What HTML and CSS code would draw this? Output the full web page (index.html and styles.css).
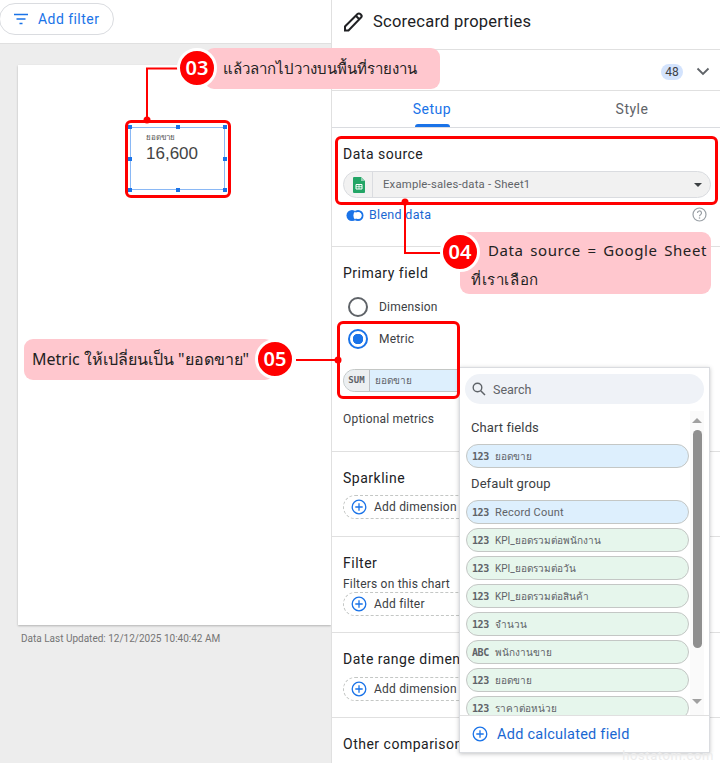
FILE: index.html
```html
<!DOCTYPE html>
<html lang="th">

<head>
    <meta charset="UTF-8">
    <meta name="viewport" content="width=device-width, initial-scale=1.0">
    <title>Scorecard properties</title>
    <link rel="stylesheet" href="styles.css">
</head>

<body>
    <div class="screen">
        <div class="report">
            <div class="report-bar">
                <button class="filter-button">
                    <svg width="16" height="12" viewBox="0 0 16 12"><path d="M1 1.500h14M3.500 6h9M6.500 10.500h3" fill="none" stroke="#1a73e8" stroke-width="1.600"/></svg>
                    Add filter
                </button>
            </div>
            <div class="canvas">
                <div class="sheet">
                    <div class="scorecard">
                        <div class="scorecard-label">ยอดขาย</div>
                        <div class="scorecard-value">16,600</div>
                        <i class="handle h-tl"></i><i class="handle h-tc"></i><i class="handle h-tr"></i>
                        <i class="handle h-ml"></i><i class="handle h-mr"></i>
                        <i class="handle h-bl"></i><i class="handle h-bc"></i><i class="handle h-br"></i>
                    </div>
                </div>
                <div class="updated">Data Last Updated: 12/12/2025 10:40:42 AM</div>
            </div>
        </div>

        <div class="panel">
            <div class="panel-title">
                <svg width="24" height="24" viewBox="0 0 24 24"><path d="M4 20.500v-4L16.500 4c.8-.8 2-.8 2.800 0l.7.7c.8.8.8 2 0 2.800L7.500 20.500H4zM14.800 5.700l3.500 3.500" fill="none" stroke="#202124" stroke-width="2"/></svg>
                <span>Scorecard properties</span>
            </div>
            <div class="panel-sub">
                <span class="count">48</span>
                <svg width="14" height="9" viewBox="0 0 14 9"><path d="M1.500 1.500L7 7l5.500-5.500" fill="none" stroke="#5f6368" stroke-width="1.800"/></svg>
            </div>
            <div class="tabs">
                <div class="tab tab-active">Setup</div>
                <div class="tab">Style</div>
            </div>

            <section class="section section-source">
                <h3 class="section-title">Data source</h3>
                <div class="source-select">
                    <span class="source-icon">
                        <svg width="12" height="16" viewBox="0 0 12 16"><path d="M1 0h7l4 4v11a1 1 0 0 1-1 1H1a1 1 0 0 1-1-1V1a1 1 0 0 1 1-1z" fill="#23a566"/><path d="M8 0l4 4H8z" fill="#8ed1b1"/><path d="M3 7.500h6v4.500H3z" fill="none" stroke="#fff" stroke-width="1"/><path d="M6 7.500v4.500M3 9.700h6" stroke="#fff" stroke-width=".8"/></svg>
                    </span>
                    <span class="source-name">Example-sales-data - Sheet1</span>
                    <span class="caret"></span>
                </div>
                <div class="blend-row">
                    <svg width="18" height="13" viewBox="0 0 18 13"><circle cx="6" cy="6.500" r="5.500" fill="#1a73e8"/><circle cx="12" cy="6.500" r="4.500" fill="#fff" stroke="#1a73e8" stroke-width="2"/><path d="M9 2.600a5.500 5.500 0 0 1 0 7.800a5.500 5.500 0 0 1 0-7.800z" fill="#fff"/><circle cx="12.500" cy="6.500" r="3" fill="#fff"/></svg>
                    <span class="blend-text">Blend data</span>
                    <svg class="help" width="15" height="15" viewBox="0 0 15 15"><circle cx="7.500" cy="7.500" r="6.500" fill="none" stroke="#9aa0a6" stroke-width="1.200"/><path d="M5.500 6a2 2 0 1 1 3 1.700c-.7.400-1 .8-1 1.500" fill="none" stroke="#9aa0a6" stroke-width="1.200"/><circle cx="7.500" cy="11" r=".8" fill="#9aa0a6"/></svg>
                </div>
            </section>

            <section class="section section-primary">
                <h3 class="section-title">Primary field</h3>
                <div class="radio-row"><span class="radio"></span>Dimension</div>
                <div class="radio-row"><span class="radio radio-on"></span>Metric</div>
                <div class="metric-chip"><span class="metric-sum">SUM</span><span class="metric-name">ยอดขาย</span></div>
                <div class="optional">Optional metrics</div>
            </section>

            <section class="section section-spark">
                <h3 class="section-title">Sparkline</h3>
                <div class="add-chip">
                    <svg class="plus" width="16" height="16" viewBox="0 0 16 16"><circle cx="8" cy="8" r="6.800" fill="none" stroke="#1a73e8" stroke-width="1.300"/><path d="M8 4.300v7.400M4.300 8h7.400" stroke="#1a73e8" stroke-width="1.300"/></svg>
                    Add dimension
                </div>
            </section>

            <section class="section section-filter">
                <h3 class="section-title">Filter</h3>
                <div class="section-note">Filters on this chart</div>
                <div class="add-chip">
                    <svg class="plus" width="16" height="16" viewBox="0 0 16 16"><circle cx="8" cy="8" r="6.800" fill="none" stroke="#1a73e8" stroke-width="1.300"/><path d="M8 4.300v7.400M4.300 8h7.400" stroke="#1a73e8" stroke-width="1.300"/></svg>
                    Add filter
                </div>
            </section>

            <section class="section section-date">
                <h3 class="section-title">Date range dimension</h3>
                <div class="add-chip">
                    <svg class="plus" width="16" height="16" viewBox="0 0 16 16"><circle cx="8" cy="8" r="6.800" fill="none" stroke="#1a73e8" stroke-width="1.300"/><path d="M8 4.300v7.400M4.300 8h7.400" stroke="#1a73e8" stroke-width="1.300"/></svg>
                    Add dimension
                </div>
            </section>

            <section class="section section-other">
                <h3 class="section-title">Other comparison</h3>
            </section>

            <div class="field-menu">
                <div class="menu-search">
                    <svg width="14" height="14" viewBox="0 0 14 14"><circle cx="5.500" cy="5.500" r="4.300" fill="none" stroke="#5f6368" stroke-width="1.400"/><path d="M8.700 8.700l4.300 4.300" stroke="#5f6368" stroke-width="1.500"/></svg>
                    <span>Search</span>
                </div>
                <div class="menu-list">
                    <div class="menu-group">Chart fields</div>
                    <div class="field field-blue field-th"><b>123</b>ยอดขาย</div>
                    <div class="menu-group">Default group</div>
                    <div class="field field-blue"><b>123</b>Record Count</div>
                    <div class="field field-th"><b>123</b>KPI_ยอดรวมต่อพนักงาน</div>
                    <div class="field field-th"><b>123</b>KPI_ยอดรวมต่อวัน</div>
                    <div class="field field-th"><b>123</b>KPI_ยอดรวมต่อสินค้า</div>
                    <div class="field field-th"><b>123</b>จำนวน</div>
                    <div class="field field-th"><b>ABC</b>พนักงานขาย</div>
                    <div class="field field-th"><b>123</b>ยอดขาย</div>
                    <div class="field field-th"><b>123</b>ราคาต่อหน่วย</div>
                    <div class="scroll-track">
                        <span class="scroll-up"></span>
                        <span class="scroll-thumb"></span>
                        <span class="scroll-down"></span>
                    </div>
                </div>
                <div class="menu-foot">
                    <svg width="16" height="16" viewBox="0 0 16 16"><circle cx="8" cy="8" r="6.800" fill="none" stroke="#1a73e8" stroke-width="1.300"/><path d="M8 4.300v7.400M4.300 8h7.400" stroke="#1a73e8" stroke-width="1.300"/></svg>
                    Add calculated field
                </div>
            </div>
        </div>

        <!-- red call-outs drawn over the screenshot -->
        <svg class="wires" width="720" height="763" viewBox="0 0 720 763">
            <path d="M180 68.500H147V120M405 202V253H443M296 360H337" fill="none" stroke="#f00" stroke-width="2"/>
            <circle cx="147" cy="120" r="3.500" fill="#f00"/>
            <circle cx="405" cy="202" r="3.500" fill="#f00"/>
            <circle cx="338" cy="360" r="3.500" fill="#f00"/>
        </svg>
        <div class="red-box box-card"></div>
        <div class="red-box box-source"></div>
        <div class="red-box box-metric"></div>

        <div class="note note-03">แล้วลากไปวางบนพื้นที่รายงาน</div>
        <div class="note note-04">Data source = Google Sheet ที่เราเลือก</div>
        <div class="note note-05">Metric ให้เปลี่ยนเป็น "ยอดขาย"</div>
        <div class="step step-03">03</div>
        <div class="step step-04">04</div>
        <div class="step step-05">05</div>

        <div class="watermark">hostatom.com</div>
    </div>
</body>

</html>
```

FILE: styles.css
```css
* {
    box-sizing: border-box;
}

body {
    margin: 0;
    font-family: Roboto, "Noto Sans", sans-serif;
    color: #202124;
    background: #fff;
}

.screen {
    position: relative;
    display: flex;
    width: 720px;
    height: 763px;
    overflow: hidden;
}

/* left side */
.report {
    display: flex;
    flex-direction: column;
    width: 331px;
    flex: none;
}

.report-bar {
    height: 44px;
    padding-top: 3px;
    background: #fff;
    border-bottom: 1px solid #e0e0e0;
}

.filter-button {
    display: flex;
    align-items: center;
    gap: 9px;
    width: 115px;
    height: 32px;
    margin-left: -1px;
    padding: 0 0 0 13px;
    font: 400 14px Roboto, sans-serif;
    letter-spacing: .45px;
    color: #1a73e8;
    background: #fff;
    border: 1px solid #dadce0;
    border-radius: 16px;
}

.canvas {
    flex: 1;
    padding: 21px 0 0 18px;
    background: #ededed;
}

.sheet {
    position: relative;
    height: 560px;
    background: #fff;
    box-shadow: 0 1px 2px rgba(0, 0, 0, .25);
}

.scorecard {
    position: absolute;
    left: 112px;
    top: 62px;
    width: 95px;
    height: 63px;
    padding: 5px 0 0 15px;
    border: 1.500px solid #8ab8f5;
}

.scorecard-label {
    font-size: 8px;
    line-height: 10px;
    color: #555;
}

.scorecard-value {
    margin-top: 1px;
    font: 17px/19px "Liberation Sans", Arial, sans-serif;
    color: #444;
}

.handle {
    position: absolute;
    width: 4px;
    height: 4px;
    background: #1a73e8;
}

.h-tl { left: -3px; top: -3px; }
.h-tc { left: 45px; top: -3px; }
.h-tr { right: -3px; top: -3px; }
.h-ml { left: -3px; top: 29px; }
.h-mr { right: -3px; top: 29px; }
.h-bl { left: -3px; bottom: -3px; }
.h-bc { left: 45px; bottom: -3px; }
.h-br { right: -3px; bottom: -3px; }

.updated {
    margin: 8px 0 0 3px;
    font-size: 10px;
    line-height: 12px;
    color: #757575;
}

/* right side */
.panel {
    position: relative;
    width: 389px;
    flex: none;
    border-left: 1px solid #e0e0e0;
    background: #fff;
}

.panel-title {
    display: flex;
    align-items: center;
    gap: 8px;
    height: 50px;
    padding: 0 0 6px 9px;
    font-size: 16.500px;
    font-weight: 400;
    letter-spacing: .25px;
    border-bottom: 1px solid #e0e0e0;
}

.panel-sub {
    display: flex;
    align-items: center;
    justify-content: flex-end;
    gap: 13px;
    height: 41px;
    padding: 3px 10px 0 0;
    border-bottom: 1px solid #e0e0e0;
}

.count {
    width: 22px;
    height: 16px;
    font-size: 12px;
    line-height: 16px;
    text-align: center;
    color: #3c4043;
    background: #d3e3fd;
    border-radius: 8px;
}

.tabs {
    display: flex;
    height: 37px;
    border-bottom: 1px solid #dadce0;
}

.tab {
    position: relative;
    flex: none;
    width: 200px;
    font-size: 14px;
    font-weight: 400;
    line-height: 36px;
    letter-spacing: .5px;
    text-align: center;
    color: #5f6368;
}

.tab-active {
    color: #1a73e8;
}

.tab-active::after {
    content: "";
    position: absolute;
    left: 83px;
    bottom: 0;
    width: 35px;
    height: 3px;
    background: #1a73e8;
    border-radius: 3px 3px 0 0;
}

.section {
    padding: 0 9px 0 11px;
    border-bottom: 1px solid #e0e0e0;
}

.section-title {
    width: 117px;
    margin: 0;
    overflow: hidden;
    font-size: 14px;
    font-weight: 400;
    line-height: 20px;
    letter-spacing: .5px;
    color: #202124;
    white-space: nowrap;
}

.section-source { height: 119px; padding-top: 16px; }
.section-primary { height: 205px; padding-top: 16px; }
.section-spark { height: 85px; padding-top: 16px; }
.section-filter { height: 96px; padding-top: 16px; }
.section-date { height: 85px; padding-top: 16px; }
.section-other { padding-top: 16px; border-bottom: 0; }

.source-select {
    display: flex;
    align-items: center;
    height: 27px;
    margin-top: 7px;
    background: #f1f1f1;
    border: 1px solid #dadce0;
    border-radius: 14px;
}

.source-icon {
    display: flex;
    align-items: center;
    justify-content: center;
    width: 29px;
    height: 100%;
    padding-left: 2px;
    border-right: 1px solid #dadce0;
}

.source-name {
    flex: 1;
    padding-left: 10px;
    font-size: 11.300px;
    letter-spacing: .2px;
    color: #5f6368;
}

.caret {
    width: 0;
    height: 0;
    margin-right: 8px;
    border: 4px solid transparent;
    border-top: 4px solid #3c4043;
    border-bottom: 0;
}

.blend-row {
    display: flex;
    align-items: center;
    gap: 5px;
    margin: 7px 0 0 3px;
    font-size: 12.500px;
    line-height: 20px;
    letter-spacing: .3px;
    color: #1967d2;
}

.blend-row .help {
    margin: -2px 4px 0 auto;
}

.radio-row {
    display: flex;
    align-items: center;
    gap: 11px;
    height: 32px;
    margin-left: 5px;
    font-size: 12px;
    letter-spacing: .2px;
    color: #3c4043;
}

.section-primary .section-title {
    margin-bottom: 8px;
}

.radio {
    width: 20px;
    height: 20px;
    border: 2px solid #5f6368;
    border-radius: 50%;
}

.radio-on {
    border-color: #1a73e8;
    background: radial-gradient(circle, #1a73e8 5px, #fff 5.500px);
}

.metric-chip {
    display: flex;
    align-items: center;
    width: 130px;
    height: 23px;
    margin-top: 14px;
    background: #ddeffd;
    border: 1px solid #c4c7c5;
    border-radius: 12px;
}

.metric-sum {
    width: 26px;
    font: 700 9px/21px "DejaVu Sans Mono", monospace;
    text-align: center;
    color: #5f6368;
    background: #eceff1;
    border-right: 1px solid #bdc1c6;
    border-radius: 12px 0 0 12px;
}

.metric-name {
    padding-left: 5px;
    font-size: 10px;
    color: #5f6368;
}

.optional {
    margin-top: 20px;
    font-size: 12px;
    letter-spacing: .2px;
    color: #3c4043;
}

.add-chip {
    display: flex;
    align-items: center;
    gap: 7px;
    width: 130px;
    height: 24px;
    margin-top: 7px;
    padding-left: 7px;
    font-size: 12px;
    letter-spacing: .2px;
    color: #3c4043;
    white-space: nowrap;
    border: 1px dashed #c4c7c5;
    border-radius: 12px;
}

.section-date .add-chip {
    margin-top: 8px;
}

.section-note {
    margin-top: 4px;
    font-size: 12px;
    line-height: 14px;
    letter-spacing: .2px;
    color: #3c4043;
}

.section-note + .add-chip {
    margin-top: 1px;
}

.field-menu {
    position: absolute;
    left: 127px;
    top: 367px;
    display: flex;
    flex-direction: column;
    width: 251px;
    height: 386px;
    background: #fff;
    border: 1px solid #dadce0;
    box-shadow: 0 1px 4px rgba(60, 64, 67, .3);
}

.menu-search {
    display: flex;
    align-items: center;
    gap: 7px;
    height: 30px;
    margin: 6px 5px 0;
    padding-left: 7px;
    font-size: 12.500px;
    color: #5f6368;
    background: #eff2f7;
    border-radius: 15px;
}

.menu-list {
    position: relative;
    flex: 1;
    overflow: hidden;
    padding: 11px 0 0 6px;
}

.menu-group {
    height: 29px;
    padding-left: 5px;
    font-size: 13px;
    line-height: 26px;
    letter-spacing: .1px;
    color: #3c4043;
}

.field + .menu-group {
    margin-top: -1px;
}

.field {
    display: flex;
    align-items: center;
    width: 223px;
    height: 24px;
    margin-bottom: 4px;
    padding-left: 5px;
    font-size: 11px;
    letter-spacing: .2px;
    color: #5f6368;
    background: #e6f6ec;
    border: 1px solid #c4c7c5;
    border-radius: 12px;
}

.field-th {
    font-size: 10px;
    letter-spacing: 0;
}

.field b {
    width: 23px;
    font: 700 10px "DejaVu Sans Mono", monospace;
    letter-spacing: -.4px;
    color: #5f6368;
}

.field-blue {
    background: #ddeffd;
}

.scroll-track {
    position: absolute;
    right: 5px;
    top: 7px;
    bottom: 0;
    display: flex;
    flex-direction: column;
    align-items: center;
    width: 14px;
    background: #fafafa;
}

.scroll-up,
.scroll-down {
    flex: none;
    width: 0;
    height: 0;
    margin-top: 7px;
    border-left: 5px solid transparent;
    border-right: 5px solid transparent;
    border-bottom: 5px solid #a0a0a0;
}

.scroll-thumb {
    width: 9px;
    height: 218px;
    margin-top: 7px;
    background: #8f8f8f;
    border-radius: 5px;
}

.scroll-down {
    margin-top: 51px;
    border-bottom: 0;
    border-top: 5px solid #a0a0a0;
}

.menu-foot {
    display: flex;
    align-items: center;
    gap: 9px;
    height: 37px;
    padding-left: 12px;
    font-size: 14.500px;
    letter-spacing: .25px;
    color: #1967d2;
    background: #fff;
    border-top: 1px solid #e0e0e0;
}

/* call-outs */
.wires {
    position: absolute;
    left: 0;
    top: 0;
    pointer-events: none;
}

.red-box {
    position: absolute;
    border: 3px solid #f00;
    border-radius: 6px;
}

.box-card { left: 125px; top: 120px; width: 106px; height: 78px; }
.box-source { left: 335px; top: 136px; width: 383px; height: 69px; }
.box-metric { left: 337px; top: 321px; width: 123px; height: 78px; }

.note {
    position: absolute;
    font-family: "Noto Sans", "Open Sans", sans-serif;
    font-size: 15px;
    color: #222;
    background: #ffc7ce;
    border-radius: 9px;
}

.note-03 {
    left: 205px;
    top: 48px;
    width: 235px;
    height: 41px;
    padding-left: 18px;
    line-height: 41px;
}

.note-04 {
    left: 460px;
    top: 232px;
    width: 251px;
    height: 62px;
    padding: 4px 4px 0 11px;
    line-height: 29px;
    letter-spacing: .6px;
    text-indent: 17px;
    text-align: justify;
}

.note-05 {
    left: 24px;
    top: 339px;
    width: 250px;
    height: 41px;
    padding-left: 8px;
    font-size: 16px;
    line-height: 41px;
}

.step {
    position: absolute;
    width: 40px;
    height: 40px;
    font: 600 20px/34px "Noto Sans", sans-serif;
    text-align: center;
    color: #fff;
    background: #f00;
    border: 3px solid #fff;
    border-radius: 50%;
}

.step-03 { left: 177px; top: 48px; }
.step-04 { left: 440px; top: 232px; }
.step-05 { left: 255px; top: 339px; }

.watermark {
    position: absolute;
    right: 6px;
    bottom: 0;
    font-size: 13px;
    line-height: 14px;
    letter-spacing: .6px;
    color: #ececec;
}
```
